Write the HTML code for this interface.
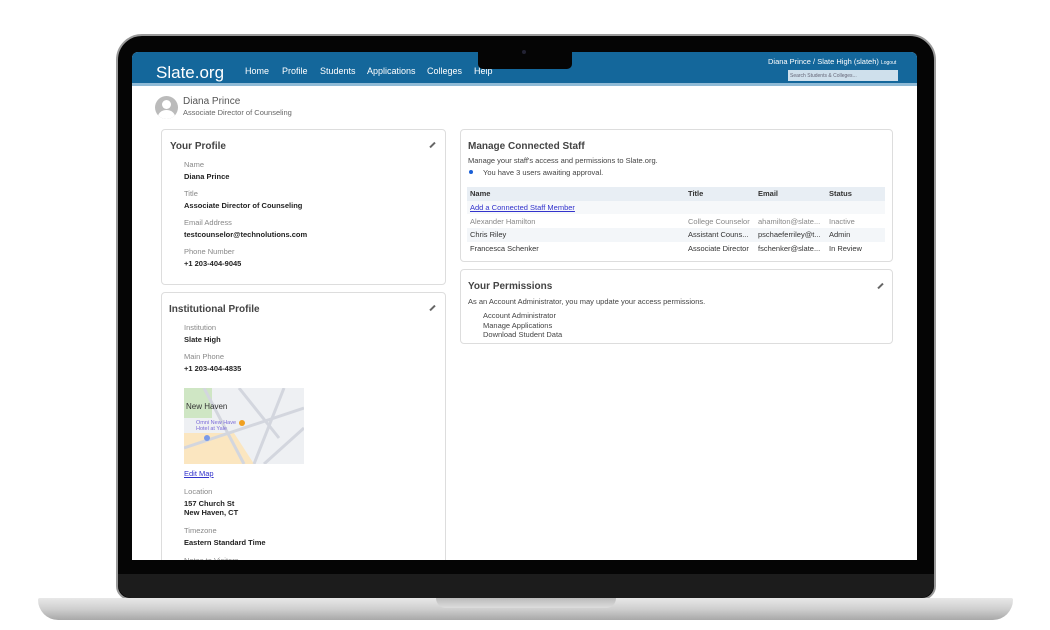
<!DOCTYPE html>
<html><head><style>
*{margin:0;padding:0;box-sizing:border-box}
body{width:1050px;height:630px;background:#fff;position:relative;overflow:hidden;font-family:"Liberation Sans",Arial,sans-serif}
.a{position:absolute}
.lid{left:116px;top:34px;width:820px;height:566px;background:#050505;border-radius:26px 26px 14px 14px;border:2px solid #9a9a9a}
.chin{left:118px;top:574px;width:816px;height:24px;background:#1c1c1c;border-radius:0 0 14px 14px}
.base{left:38px;top:598px;width:975px;height:22px;background:linear-gradient(#e8e8e8,#cfcfcf 50%,#a8a8a8);border-radius:2px 2px 22px 22px}
.notchb{left:436px;top:598px;width:180px;height:10px;background:linear-gradient(#bbb,#ddd);border-radius:0 0 10px 10px}
.screen{left:132px;top:52px;width:785px;height:508px;background:#fff;overflow:hidden;border-radius:6px 6px 0 0}
.hdr{left:0;top:0;width:785px;height:34px;background:#14679b;border-bottom:3px solid #8fbad6}
.logo{left:24px;top:11px;color:#fff;font-size:17px}
.nav{top:14px;color:#fff;font-size:9px}
.notch{left:478px;top:52px;width:94px;height:17px;background:#050505;border-radius:0 0 5px 5px}
.card{background:#fff;border:1px solid #ddd;border-radius:4px}
.h{font-size:10px;font-weight:bold;color:#444}
.l{font-size:7.5px;color:#888}
.v{font-size:7.5px;color:#222;font-weight:bold}
.t{font-size:7.5px;color:#444}
.pen{width:7px;height:2px;background:#666;transform:rotate(-45deg)}
table{border-collapse:collapse;font-size:7.5px;color:#333}
td,th{padding:0 3px;height:13.7px;text-align:left;white-space:nowrap}
</style></head><body>
<div class="a lid"></div>
<div class="a chin"></div>
<div class="a base"></div>
<div class="a notchb"></div>
<div class="a screen">
 <div class="a hdr"></div>
 <div class="a logo">Slate.org</div>
 <div class="a nav" style="left:113px">Home</div>
 <div class="a nav" style="left:150px">Profile</div>
 <div class="a nav" style="left:188px">Students</div>
 <div class="a nav" style="left:235px">Applications</div>
 <div class="a nav" style="left:295px">Colleges</div>
 <div class="a nav" style="left:342px">Help</div>
 <div class="a" style="left:636px;top:5px;color:#fff;font-size:7.5px">Diana Prince / Slate High (slateh) <span style="font-size:5px">Logout</span></div>
 <div class="a" style="left:656px;top:18px;width:110px;height:11px;background:#cfe0ec;font-size:5px;color:#667;padding:3px 2px">Search Students &amp; Colleges...</div>
 <div class="a" style="left:23px;top:44px;width:23px;height:23px;border-radius:50%;background:#bbb;overflow:hidden"><div class="a" style="left:7px;top:4px;width:9px;height:9px;border-radius:50%;background:#fff"></div><div class="a" style="left:3px;top:14px;width:17px;height:14px;border-radius:50%;background:#fff"></div></div>
 <div class="a" style="left:51px;top:44px;font-size:10px;color:#555">Diana Prince</div>
 <div class="a" style="left:51px;top:56px;font-size:7.5px;color:#666">Associate Director of Counseling</div>

 <div class="a card" style="left:29px;top:77px;width:285px;height:156px">
  <div class="a h" style="left:8px;top:11px">Your Profile</div>
  <div class="a pen" style="left:267px;top:14px"></div>
  <div class="a l" style="left:22px;top:30px">Name</div><div class="a v" style="left:22px;top:42px">Diana Prince</div>
  <div class="a l" style="left:22px;top:59px">Title</div><div class="a v" style="left:22px;top:71px">Associate Director of Counseling</div>
  <div class="a l" style="left:22px;top:88px">Email Address</div><div class="a v" style="left:22px;top:100px">testcounselor@technolutions.com</div>
  <div class="a l" style="left:22px;top:117px">Phone Number</div><div class="a v" style="left:22px;top:129px">+1 203-404-9045</div>
 </div>

 <div class="a card" style="left:29px;top:240px;width:285px;height:280px">
  <div class="a h" style="left:7px;top:11px">Institutional Profile</div>
  <div class="a pen" style="left:267px;top:14px"></div>
  <div class="a l" style="left:22px;top:30px">Institution</div><div class="a v" style="left:22px;top:42px">Slate High</div>
  <div class="a l" style="left:22px;top:59px">Main Phone</div><div class="a v" style="left:22px;top:71px">+1 203-404-4835</div>
  <svg class="a" style="left:22px;top:95px" width="120" height="76" viewBox="0 0 120 76">
   <rect width="120" height="76" fill="#eef0f3"/>
   <path d="M0 0h28v30H0z" fill="#cfe6c4"/>
   <path d="M0 45 L50 45 L70 76 L0 76z" fill="#fbe6c0"/>
   <g stroke="#d3d6de" stroke-width="3" fill="none"><path d="M20 0 L60 76"/><path d="M55 0 L95 50"/><path d="M0 60 L120 20"/><path d="M80 76 L120 40"/><path d="M100 0 L70 76"/></g>
   <text x="2" y="21" font-size="8" fill="#333" font-family="Liberation Sans">New Haven</text>
   <text x="12" y="36" font-size="5.5" fill="#7a6ad8" font-family="Liberation Sans">Omni New Have</text>
   <text x="12" y="42" font-size="5.5" fill="#7a6ad8" font-family="Liberation Sans">Hotel at Yale</text>
   <circle cx="23" cy="50" r="3" fill="#7a9ae8"/><circle cx="58" cy="35" r="3" fill="#f0a020"/>
  </svg>
  <div class="a" style="left:22px;top:176px;font-size:7.5px;color:#33c;text-decoration:underline">Edit Map</div>
  <div class="a l" style="left:22px;top:194px">Location</div><div class="a v" style="left:22px;top:206px">157 Church St<br>New Haven, CT</div>
  <div class="a l" style="left:22px;top:233px">Timezone</div><div class="a v" style="left:22px;top:245px">Eastern Standard Time</div>
  <div class="a l" style="left:22px;top:263px">Notes to Visitors</div>
 </div>

 <div class="a card" style="left:328px;top:77px;width:433px;height:133px">
  <div class="a h" style="left:7px;top:11px">Manage Connected Staff</div>
  <div class="a t" style="left:7px;top:26px">Manage your staff's access and permissions to Slate.org.</div>
  <div class="a" style="left:8px;top:40px;width:4px;height:4px;border-radius:50%;background:#1a5fd6"></div>
  <div class="a t" style="left:22px;top:38px">You have 3 users awaiting approval.</div>
  <table class="a" style="left:6px;top:57px;width:418px">
   <tr style="background:#e8eef4"><th>Name</th><th>Title</th><th>Email</th><th>Status</th></tr>
   <tr style="background:#f6f8fa"><td colspan="4" style="color:#33c;text-decoration:underline">Add a Connected Staff Member</td></tr>
   <tr style="color:#888"><td style="width:218px">Alexander Hamilton</td><td style="width:70px">College Counselor</td><td style="width:71px">ahamilton@slate...</td><td>Inactive</td></tr>
   <tr style="background:#f3f6f9"><td>Chris Riley</td><td>Assistant Couns...</td><td>pschaeferriley@t...</td><td>Admin</td></tr>
   <tr><td>Francesca Schenker</td><td>Associate Director</td><td>fschenker@slate...</td><td>In Review</td></tr>
  </table>
 </div>

 <div class="a card" style="left:328px;top:217px;width:433px;height:75px">
  <div class="a h" style="left:7px;top:11px">Your Permissions</div>
  <div class="a pen" style="left:416px;top:15px"></div>
  <div class="a t" style="left:7px;top:27px">As an Account Administrator, you may update your access permissions.</div>
  <div class="a t" style="left:22px;top:41px;line-height:9.5px">Account Administrator<br>Manage Applications<br>Download Student Data</div>
 </div>
</div>
<div class="a notch"></div>
<div class="a" style="left:522px;top:50px;width:4px;height:4px;border-radius:50%;background:#223"></div>
</body></html>
